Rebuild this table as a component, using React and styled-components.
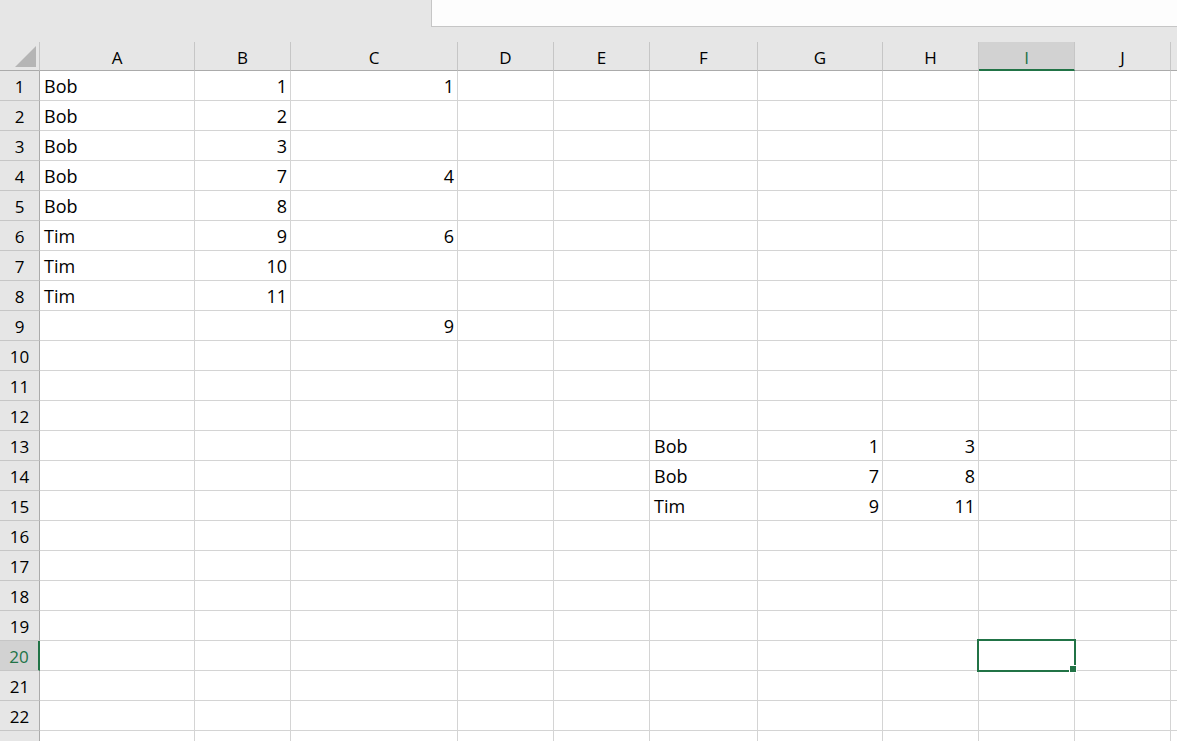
import styled, { createGlobalStyle } from "styled-components";

const GREEN = "#217346";

const GlobalStyle = createGlobalStyle`
    html, body {
        margin: 0;
        padding: 0;
        background: #e6e6e6;
        overflow: hidden;
    }
    body {
        font-family: "Open Sans", "Noto Sans", sans-serif;
        color: #000;
    }
`;

// K is only a sliver at the right edge, so its letter is not shown
const columns = [
    { name: "A", width: 155 },
    { name: "B", width: 96 },
    { name: "C", width: 167 },
    { name: "D", width: 96 },
    { name: "E", width: 96 },
    { name: "F", width: 108 },
    { name: "G", width: 125 },
    { name: "H", width: 96 },
    { name: "I", width: 96 },
    { name: "J", width: 96 },
    { name: "K", width: 96, hidden: true },
];

const data = {
    A1: "Bob", A2: "Bob", A3: "Bob", A4: "Bob", A5: "Bob", A6: "Tim", A7: "Tim", A8: "Tim",
    B1: 1, B2: 2, B3: 3, B4: 7, B5: 8, B6: 9, B7: 10, B8: 11,
    C1: 1, C4: 4, C6: 6, C9: 9,
    F13: "Bob", F14: "Bob", F15: "Tim",
    G13: 1, G14: 7, G15: 9,
    H13: 3, H14: 8, H15: 11,
};

const ROWS = 23;
const activeCol = "I";
const activeRow = 20;

const Page = styled.div`
    width: 1177px;
    height: 741px;
    overflow: hidden;
    background: #e6e6e6;
`;

const TopBar = styled.div`
    display: flex;
    height: 27px;
`;

const TabSpace = styled.div`
    width: 431px;
    background: #e6e6e6;
`;

const FormulaBox = styled.div`
    flex: 1;
    background: #fdfdfd;
    border-left: 1px solid #c6c6c6;
    border-bottom: 1px solid #c6c6c6;
`;

const Sheet = styled.div`
    margin-top: 15px;
    display: grid;
    grid-template-columns: 40px ${columns.map((c) => `${c.width}px`).join(" ")};
    grid-template-rows: 29px;
    grid-auto-rows: 30px;
    background: #fff;
`;

const Corner = styled.div`
    position: relative;
    background: #e6e6e6;
    border-right: 1px solid #c6c6c6;
    border-bottom: 1px solid #ababab;
    box-sizing: border-box;
`;

const Triangle = styled.div`
    position: absolute;
    right: 3px;
    bottom: 3px;
    width: 0;
    height: 0;
    border-left: 21px solid transparent;
    border-bottom: 21px solid #b5b5b5;
`;

const ColHeader = styled.div`
    box-sizing: border-box;
    display: flex;
    align-items: center;
    justify-content: center;
    background: ${(p) => (p.$active ? "#d2d2d2" : "#e6e6e6")};
    color: ${(p) => (p.$active ? GREEN : "#000")};
    border-right: 1px solid #c6c6c6;
    border-bottom: ${(p) => (p.$active ? `2px solid ${GREEN}` : "1px solid #ababab")};
    font-size: 17px;
    padding-top: 3px;
`;

const RowHeader = styled.div`
    box-sizing: border-box;
    display: flex;
    align-items: flex-end;
    justify-content: center;
    padding-bottom: 2px;
    background: ${(p) => (p.$active ? "#d2d2d2" : "#e6e6e6")};
    color: ${(p) => (p.$active ? GREEN : "#000")};
    border-right: ${(p) => (p.$active ? `2px solid ${GREEN}` : "1px solid #ababab")};
    border-bottom: 1px solid #c6c6c6;
    font-size: 17px;
`;

const Cell = styled.div`
    position: relative;
    box-sizing: border-box;
    display: flex;
    align-items: flex-end;
    justify-content: ${(p) => (p.$numeric ? "flex-end" : "flex-start")};
    padding: 0 3px 2px 4px;
    border-right: 1px solid #d4d4d4;
    border-bottom: 1px solid #d4d4d4;
    font-size: 18px;
    white-space: nowrap;
`;

const Selection = styled.div`
    position: absolute;
    left: -2px;
    top: -2px;
    width: 99px;
    height: 33px;
    box-sizing: border-box;
    border: 2px solid ${GREEN};
    pointer-events: none;
    z-index: 2;
`;

const FillHandle = styled.div`
    position: absolute;
    right: -3px;
    bottom: -3px;
    width: 6px;
    height: 6px;
    background: ${GREEN};
    border: 1px solid #fff;
`;

const App = () => {
    const rows = Array.from({ length: ROWS }, (_, i) => i + 1);
    return (
        <Page>
            <GlobalStyle />
            <TopBar>
                <TabSpace />
                <FormulaBox />
            </TopBar>
            <Sheet>
                <Corner>
                    <Triangle />
                </Corner>
                {columns.map((c) => (
                    <ColHeader key={c.name} $active={c.name === activeCol}>
                        {c.hidden ? null : c.name}
                    </ColHeader>
                ))}
                {rows.map((r) => [
                    <RowHeader key={`h${r}`} $active={r === activeRow}>
                        {r}
                    </RowHeader>,
                    ...columns.map((c) => {
                        const value = data[`${c.name}${r}`];
                        const active = c.name === activeCol && r === activeRow;
                        return (
                            <Cell key={`${c.name}${r}`} $numeric={typeof value === "number"}>
                                {value}
                                {active && (
                                    <Selection>
                                        <FillHandle />
                                    </Selection>
                                )}
                            </Cell>
                        );
                    }),
                ])}
            </Sheet>
        </Page>
    );
};

export default App;
